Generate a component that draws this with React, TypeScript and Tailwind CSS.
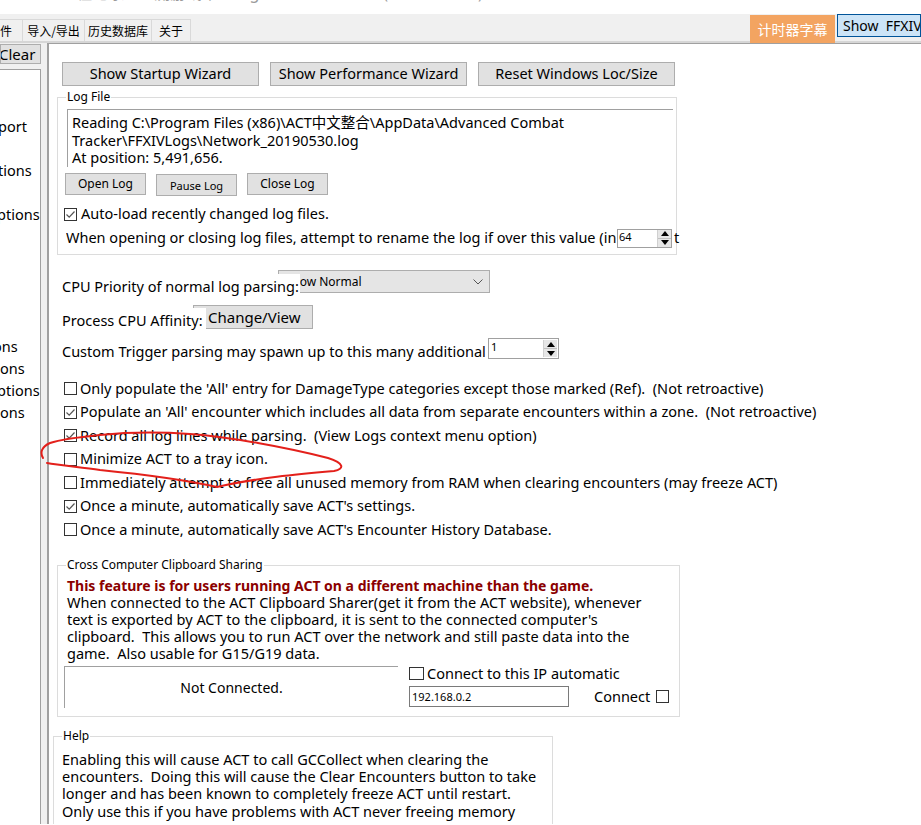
import React from "react";

const Check = ({ checked = false, className = "" }: { checked?: boolean; className?: string }) => (
  <span
    className={`w-[13px] h-[13px] border border-[#333333] bg-white flex items-center justify-center shrink-0 ${className}`}
  >
    {checked && (
      <svg width="11" height="11" viewBox="0 0 11 11">
        <path d="M1.5 5.5 L4.2 8.2 L9.5 2.5" fill="none" stroke="#555555" strokeWidth="1.2" />
      </svg>
    )}
  </span>
);

const Spinner = () => (
  <div className="w-[14px] h-[17px] flex flex-col border-l border-[#d0d0d0] bg-[#e6e6e6] shrink-0">
    <div className="flex-1 flex items-center justify-center border-b border-[#c0c0c0]">
      <svg width="8" height="5" viewBox="0 0 8 5">
        <path d="M0 5 L4 0 L8 5 Z" fill="#000" />
      </svg>
    </div>
    <div className="flex-1 flex items-center justify-center">
      <svg width="8" height="5" viewBox="0 0 8 5">
        <path d="M0 0 L8 0 L4 5 Z" fill="#000" />
      </svg>
    </div>
  </div>
);

const Group = ({
  title,
  className = "",
  children,
}: {
  title: string;
  className?: string;
  children: React.ReactNode;
}) => (
  <div className={`relative shrink-0 border border-[#dcdcdc] ${className}`}>
    <span className="absolute -top-[9px] left-[8px] bg-white px-[1px] text-[12px] leading-[16px] whitespace-nowrap">
      {title}
    </span>
    {children}
  </div>
);

const options = [
  { checked: false, text: "Only populate the 'All' entry for DamageType categories except those marked (Ref).  (Not retroactive)" },
  { checked: true, text: "Populate an 'All' encounter which includes all data from separate encounters within a zone.  (Not retroactive)" },
  { checked: true, text: "Record all log lines while parsing.  (View Logs context menu option)" },
  { checked: false, text: "Minimize ACT to a tray icon." },
  { checked: false, text: "Immediately attempt to free all unused memory from RAM when clearing encounters (may freeze ACT)" },
  { checked: true, text: "Once a minute, automatically save ACT's settings." },
  { checked: false, text: "Once a minute, automatically save ACT's Encounter History Database." },
];

const clipText = [
  "When connected to the ACT Clipboard Sharer(get it from the ACT website), whenever",
  "text is exported by ACT to the clipboard, it is sent to the connected computer's",
  "clipboard.  This allows you to run ACT over the network and still paste data into the",
  "game.  Also usable for G15/G19 data.",
];

const helpText = [
  "Enabling this will cause ACT to call GCCollect when clearing the",
  "encounters.  Doing this will cause the Clear Encounters button to take",
  "longer and has been known to completely freeze ACT until restart.",
  "Only use this if you have problems with ACT never freeing memory",
  "usage.",
];

const btn = "bg-[#e1e1e1] border border-[#adadad] flex items-center justify-center shrink-0";

export default function App() {
  return (
    <div className="w-[921px] h-[825px] overflow-hidden bg-white relative font-['Noto_Sans','Noto_Sans_CJK_SC',sans-serif] text-[14.5px] text-black">
      {/* window title, mostly scrolled off */}
      <div className="h-[14px] overflow-hidden">
        <div className="-mt-[17px] whitespace-pre text-[16px] leading-[20px] text-[#9a9a9a]">
          racker - 正在记录 - 监测游戏中 - Log Timer: 10:00:10 (Est 10:00:00)
        </div>
      </div>

      {/* tab strip */}
      <div className="h-[29px] bg-[#f0f0f0] border-b-2 border-[#d6d6d6] flex justify-between">
        <div className="flex items-end text-[12px] font-['Noto_Sans_CJK_SC',sans-serif]">
          {[
            { t: "件", w: "w-[23px]" },
            { t: "导入/导出", w: "w-[62px]" },
            { t: "历史数据库", w: "w-[67px]" },
            { t: "关于", w: "w-[39px]" },
          ].map((tab, i) => (
            <div
              key={i}
              className={`${tab.w} h-[22px] border-t border-r border-[#d9d9d9] flex items-center whitespace-nowrap overflow-hidden ${
                i === 0 ? "justify-start" : "justify-center"
              }`}
            >
              {tab.t}
            </div>
          ))}
        </div>
        <div className="flex items-start">
          <div className="mt-[1px] w-[85px] h-[29px] bg-[#f3a461] text-white text-[14px] flex items-center justify-center font-['Noto_Sans_CJK_SC',sans-serif]">
            计时器字幕
          </div>
          <div className="ml-[2px] w-[84px] h-[23px] bg-[#cce4f7] border border-[#005499] text-[14px] whitespace-pre pl-[5px] flex items-center overflow-hidden">
            Show  FFXIV
          </div>
        </div>
      </div>

      <div className="flex h-[781px]">
        {/* left column */}
        <div className="w-[47px] shrink-0 bg-[#f0f0f0] flex flex-col">
          <div className={`${btn} mt-[1px] w-[41px] h-[20px] text-[15px] !justify-start overflow-hidden`}>
            <span className="-ml-[2px]">Clear</span>
          </div>
          <div className="mt-[5px] w-[41px] flex-1 bg-white border-t border-r border-[#a0a0a0] flex flex-col overflow-hidden whitespace-nowrap">
            <div className="shrink-0 mt-[45px] h-[22px] leading-[22px] -ml-[2px]">port</div>
            <div className="shrink-0 mt-[22px] h-[22px] leading-[22px] -ml-[2px]">tions</div>
            <div className="shrink-0 mt-[22px] h-[22px] leading-[22px] -ml-[3px]">ptions</div>
            <div className="shrink-0 mt-[110px] h-[22px] leading-[22px] -ml-[7px]">ons</div>
            <div className="shrink-0 h-[22px] leading-[22px]">ons</div>
            <div className="shrink-0 h-[22px] leading-[22px] -ml-[3px]">ptions</div>
            <div className="shrink-0 h-[22px] leading-[22px]">ons</div>
          </div>
        </div>

        {/* main panel */}
        <div className="flex-1 border-l-2 border-t border-[#a0a0a0] bg-white flex flex-col overflow-hidden">
          <div className="shrink-0 mt-[18px] ml-[13px] flex gap-[11px]">
            {["Show Startup Wizard", "Show Performance Wizard", "Reset Windows Loc/Size"].map((b) => (
              <div key={b} className={`${btn} w-[197px] h-[24px]`}>
                {b}
              </div>
            ))}
          </div>

          <Group title="Log File" className="mt-[11px] ml-[8px] w-[620px] h-[158px] pl-[7px] pt-[11px]">
            <div className="ml-[2px] w-[606px] h-[58px] border-t border-l border-[#a0a0a0] pl-[4px] pt-[4px] leading-[17.5px] whitespace-nowrap">
              <div>Reading C:\Program Files (x86)\ACT中文整合\AppData\Advanced Combat</div>
              <div>Tracker\FFXIVLogs\Network_20190530.log</div>
              <div>At position: 5,491,656.</div>
            </div>
            <div className="mt-[6px] flex gap-[10px] items-start">
              <div className={`${btn} w-[81px] h-[22px] text-[12px]`}>Open Log</div>
              <div className={`${btn} mt-[1px] w-[81px] h-[22px] text-[11px] pt-[3px]`}>Pause Log</div>
              <div className={`${btn} w-[81px] h-[22px] text-[12px]`}>Close Log</div>
            </div>
            <div className="mt-[8px] -ml-[1px] h-[20px] flex items-center">
              <Check checked />
              <span className="ml-[4px]">Auto-load recently changed log files.</span>
            </div>
            <div className="mt-[4px] ml-[1px] h-[20px] flex items-center whitespace-nowrap">
              <span className="w-[551px] overflow-hidden shrink-0">
                When opening or closing log files, attempt to rename the log if over this value (in
              </span>
              <div className="w-[55px] h-[19px] shrink-0 border border-[#a0a0a0] flex items-start justify-between pl-[1px] text-[11px] leading-[14px]">
                <span>64</span>
                <Spinner />
              </div>
              <span className="ml-[2px]">t</span>
            </div>
          </Group>

          {/* CPU priority */}
          <div className="shrink-0 mt-[15px] ml-[13px] flex items-start">
            <div className="relative z-10 bg-white w-[238px] shrink-0 mt-[4px] h-[24px] leading-[24px] whitespace-nowrap">
              CPU Priority of normal log parsing:
            </div>
            <div className="-ml-[22px] w-[212px] h-[23px] shrink-0 bg-[#e5e5e5] border border-[#adadad] flex items-center justify-between pl-[3px] pr-[6px] text-[12px]">
              <span>Below Normal</span>
              <svg width="10" height="6" viewBox="0 0 10 6">
                <path d="M0.5 0.5 L5 5 L9.5 0.5" fill="none" stroke="#555" strokeWidth="1" />
              </svg>
            </div>
          </div>

          {/* affinity */}
          <div className="shrink-0 mt-[7px] ml-[13px] flex items-start">
            <div className="relative z-10 bg-white w-[144px] shrink-0 mt-[3px] h-[24px] leading-[24px] whitespace-nowrap">
              Process CPU Affinity:
            </div>
            <div className="-ml-[13px] w-[120px] h-[24px] shrink-0 bg-[#e1e1e1] border border-[#adadad] flex items-center justify-start pl-[14px] text-[15px] whitespace-nowrap">
              Change/View
            </div>
          </div>

          {/* trigger threads */}
          <div className="shrink-0 mt-[6px] ml-[13px] flex items-start">
            <div className="w-[426px] shrink-0 mt-[3px] h-[20px] leading-[20px] whitespace-nowrap overflow-hidden">
              Custom Trigger parsing may spawn up to this many additional
            </div>
            <div className="w-[71px] h-[21px] shrink-0 border border-[#a0a0a0] flex items-start justify-between pl-[2px] pr-[1px] pt-[1px] text-[11px] leading-[14px]">
              <span>1</span>
              <Spinner />
            </div>
          </div>

          {/* checkbox options */}
          <div className="shrink-0 mt-[16px] ml-[15px] flex flex-col">
            {options.map((o, i) => (
              <div key={i} className="h-[23.5px] flex items-center whitespace-pre">
                <Check checked={o.checked} />
                <span className="ml-[3px]">{o.text}</span>
              </div>
            ))}
          </div>

          {/* clipboard sharing */}
          <Group title="Cross Computer Clipboard Sharing" className="mt-[23px] ml-[8px] w-[623px] h-[152px] pl-[9px] pt-[11px]">
            <div className="leading-[17.2px] whitespace-nowrap">
              <div className="font-bold text-[14px] text-[#8b0000]">
                This feature is for users running ACT on a different machine than the game.
              </div>
              {clipText.map((l) => (
                <div key={l} className="whitespace-pre">
                  {l}
                </div>
              ))}
            </div>
            <div className="mt-[3px] -ml-[3px] flex items-start">
              <div className="w-[334px] h-[42px] shrink-0 border-t border-l border-[#a0a0a0] flex items-center justify-center text-[14px]">
                Not Connected.
              </div>
              <div className="ml-[11px] flex flex-col">
                <div className="h-[16px] flex items-center">
                  <Check className="w-[15px]" />
                  <span className="ml-[3px] whitespace-nowrap">Connect to this IP automatic</span>
                </div>
                <div className="mt-[4px] flex items-center">
                  <div className="w-[160px] h-[21px] shrink-0 border border-[#7a7a7a] pl-[2px] text-[11px] leading-[19px]">
                    192.168.0.2
                  </div>
                  <span className="ml-[25px]">Connect</span>
                  <Check className="ml-[6px]" />
                </div>
              </div>
            </div>
          </Group>

          {/* help */}
          <Group title="Help" className="mt-[19px] ml-[4px] w-[500px] h-[120px] pl-[8px] pt-[14px]">
            <div className="leading-[17.4px] whitespace-pre">
              {helpText.map((l) => (
                <div key={l}>{l}</div>
              ))}
            </div>
          </Group>
        </div>
      </div>

      {/* red hand-drawn annotation */}
      <svg className="absolute left-0 top-0 pointer-events-none" width="921" height="825">
        <path
          d="M43 458 C40 453 41 447 50 443 C62 439 80 437 100 435 C130 432 160 432 190 434 C230 437 285 447 328 458 C344 463 345 469 334 471 C300 474 255 478 217 487 C190 481 140 474 100 470 C78 467 58 465 47 463"
          fill="none"
          stroke="#e3201b"
          strokeWidth="2"
          strokeLinecap="round"
        />
      </svg>
    </div>
  );
}
